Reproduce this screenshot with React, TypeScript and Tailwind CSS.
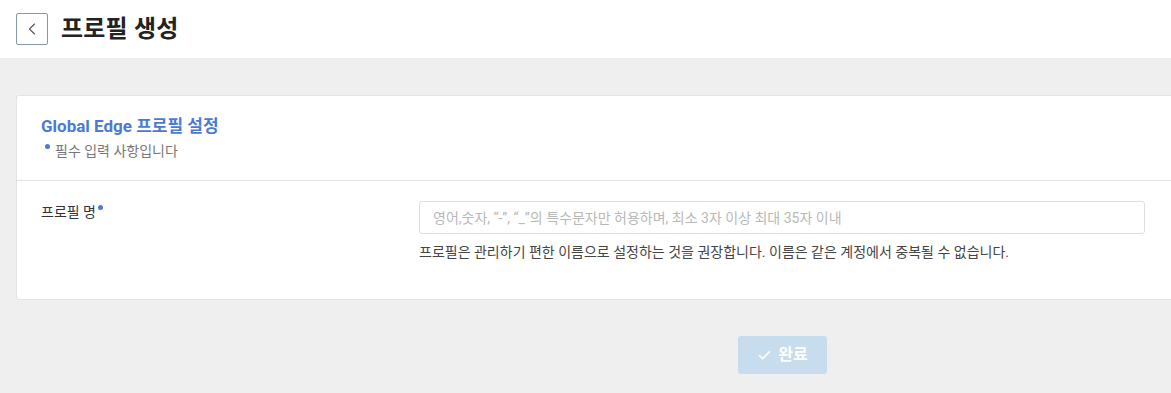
import { ChevronLeft, Check } from "lucide-react";

export default function App() {
  return (
    <div className="w-[1171px] h-[393px] overflow-hidden bg-[#efefef] font-['Roboto','Noto_Sans_CJK_KR',sans-serif]">
      <header className="h-[58px] bg-white flex items-center pl-4 gap-[13px]">
        <button className="w-8 h-8 flex items-center justify-center rounded-[2px] border border-[#8797b0] bg-white">
          <ChevronLeft className="w-[20px] h-[20px] text-[#555]" strokeWidth={1.3} />
        </button>
        <h1 className="text-[24px] font-bold text-[#222] tracking-[0.2px]">프로필 생성</h1>
      </header>

      <div className="pl-4 pt-[37px]">
        <section className="w-[1200px] bg-white border border-[#e3e3e3] rounded-[3px]">
          <div className="pl-6 pt-[18px] pb-[19px] border-b border-[#e3e3e3]">
            <h2 className="text-[17px] font-bold text-[#4b7bd1] leading-6">Global Edge 프로필 설정</h2>
            <p className="mt-[3px] flex items-start text-[14px] text-[#777] leading-5">
              <span className="w-[5px] h-[5px] rounded-full bg-[#4b7bd1] mt-[3px] ml-[4px] mr-[5px]" />
              필수 입력 사항입니다
            </p>
          </div>
          <div className="flex pl-6 pt-5 pb-[37px]">
            <div className="w-[378px] flex items-start text-[14px] text-[#333] leading-5 pt-[1px]">
              프로필 명
              <span className="w-[5px] h-[5px] rounded-full bg-[#4b7bd1] mt-[3px] ml-[2px]" />
            </div>
            <div className="flex flex-col">
              <input
                className="w-[726px] h-[33px] border border-[#dedede] rounded-[3px] px-[13px] text-[14px] outline-none placeholder:text-[#b8b8b8]"
                placeholder={"영어,숫자, “-”, “_”의 특수문자만 허용하며, 최소 3자 이상 최대 35자 이내"}
              />
              <p className="mt-[8px] text-[14px] text-[#444] leading-5">
                프로필은 관리하기 편한 이름으로 설정하는 것을 권장합니다. 이름은 같은 계정에서 중복될 수 없습니다.
              </p>
            </div>
          </div>
        </section>

        <div className="pt-[36px] pl-[722px]">
          <button className="w-[89px] h-[38px] rounded-[3px] bg-[#c7dcec] flex items-center justify-center gap-[6px] text-white text-[16px] font-bold">
            <Check className="w-[15px] h-[15px]" strokeWidth={2.5} />
            완료
          </button>
        </div>
      </div>
    </div>
  );
}
